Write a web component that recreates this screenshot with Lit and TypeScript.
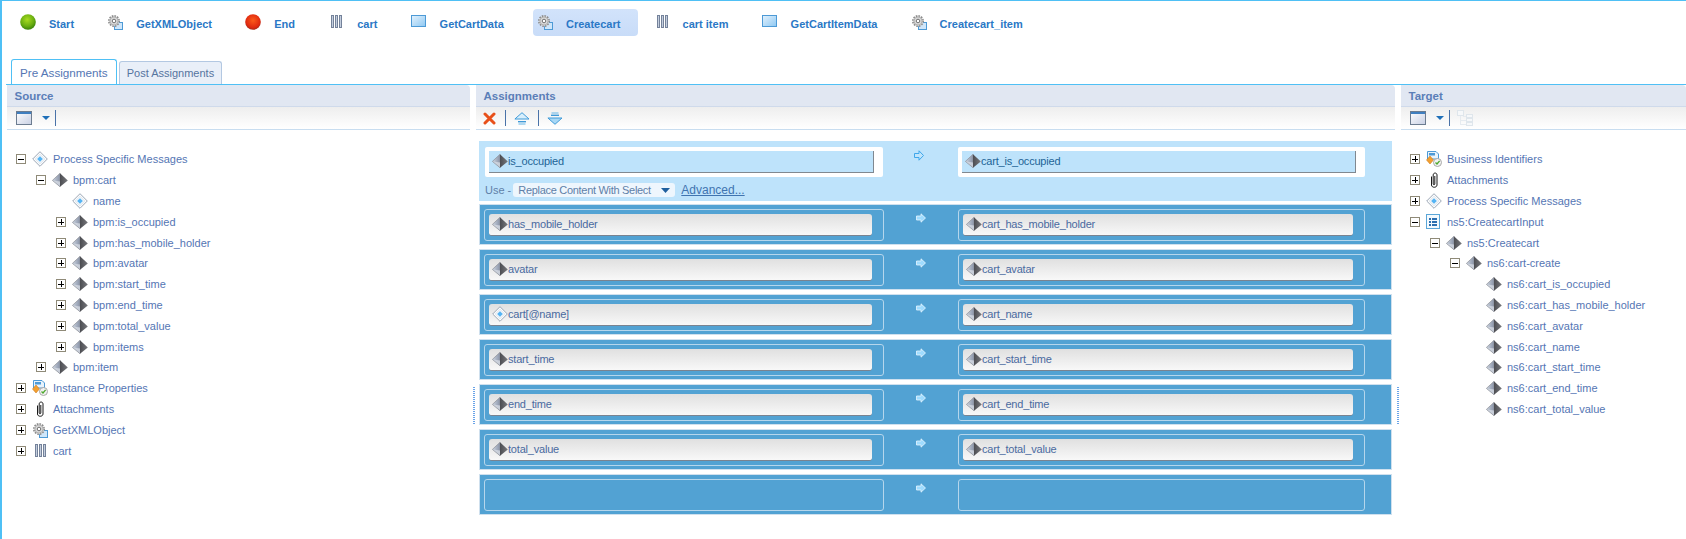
import { LitElement, css, html, svg } from "lit";
import { customElement } from "lit/decorators.js";
import { classMap } from "lit/directives/class-map.js";

type IconName =
  | "start" | "end" | "gear" | "bars" | "box"
  | "pyramid" | "diamond" | "props" | "clip" | "grid";

interface TreeNode {
  label: string;
  level: number;
  icon: IconName;
  toggle?: "plus" | "minus";
}

const icons: Record<IconName, unknown> = {
  start: svg`<svg width="16" height="16" viewBox="0 0 16 16">
    <defs><radialGradient id="g1" cx=".45" cy=".35" r=".7"><stop offset="0" stop-color="#a8dc20"/><stop offset=".6" stop-color="#6aae10"/><stop offset="1" stop-color="#2f7a08"/></radialGradient></defs>
    <circle cx="8" cy="8" r="7.8" fill="url(#g1)"/></svg>`,
  end: svg`<svg width="16" height="16" viewBox="0 0 16 16">
    <defs><radialGradient id="r1" cx=".5" cy=".4" r=".7"><stop offset="0" stop-color="#fb5a1a"/><stop offset=".65" stop-color="#e02a10"/><stop offset="1" stop-color="#7a2a20"/></radialGradient></defs>
    <circle cx="8" cy="8" r="7.8" fill="url(#r1)"/></svg>`,
  gear: svg`<svg width="16" height="16" viewBox="0 0 16 16">
    <rect x="7.5" y="8.5" width="8" height="7" fill="#cfe6fa" stroke="#4d9ad6"/>
    <circle cx="7" cy="7" r="5.2" fill="#e4e4e4" stroke="#8c8c8c" stroke-width="1.6" stroke-dasharray="1.6 1.1"/>
    <circle cx="7" cy="7" r="4" fill="#dcdcdc" stroke="#a0a0a0" stroke-width=".7"/>
    <circle cx="7" cy="7" r="1.8" fill="#fff" stroke="#707070"/></svg>`,
  bars: svg`<svg width="16" height="14" viewBox="0 0 16 14" shape-rendering="crispEdges">
    <g fill="#c4cede" stroke="#74829a"><rect x="3.5" y=".5" width="2" height="12"/><rect x="7.5" y=".5" width="2" height="12"/><rect x="11.5" y=".5" width="2" height="12"/></g></svg>`,
  box: svg`<svg width="16" height="14" viewBox="0 0 16 14">
    <defs><linearGradient id="b1" x1="0" y1="0" x2="1" y2="1"><stop offset="0" stop-color="#e4f2fd"/><stop offset="1" stop-color="#8ec8f2"/></linearGradient></defs>
    <rect x=".5" y=".5" width="14" height="11" fill="url(#b1)" stroke="#4d9ad6"/></svg>`,
  pyramid: svg`<svg width="16" height="14" viewBox="0 0 16 14">
    <defs><linearGradient id="p1" x1="0" y1="0" x2="1" y2="0"><stop offset="0" stop-color="#ccd4e0"/><stop offset="1" stop-color="#8a94a8"/></linearGradient>
    <linearGradient id="p2" x1="0" y1="0" x2="1" y2="0"><stop offset="0" stop-color="#4c4d52"/><stop offset="1" stop-color="#77787c"/></linearGradient></defs>
    <path d="M8 .3 .4 7.4 8 13.7Z" fill="url(#p1)" stroke="#8c8f96" stroke-width=".7"/>
    <path d="M8 .3 15.8 7.4 8 13.7Z" fill="url(#p2)"/>
    <path d="M1.2 7.6 8 8.6 8 13.3Z" fill="#d4dae2" opacity=".8"/></svg>`,
  diamond: svg`<svg width="16" height="16" viewBox="0 0 16 16">
    <path d="M8 .7 15.3 8 8 15.3 .7 8Z" fill="#fff" stroke="#9aa6b4"/>
    <path d="M8 2.8 13.2 8 8 13.2 2.8 8Z" fill="#eef3f8" stroke="#d0d8e0" stroke-width=".5"/>
    <path d="M8 5.2 10.8 8 8 10.8 5.2 8Z" fill="#55b4f4"/></svg>`,
  props: svg`<svg width="16" height="16" viewBox="0 0 16 16">
    <path d="M1.5 .5H10L12.5 3V8H1.5Z" fill="#e8f3fc" stroke="#4d9ad6"/>
    <rect x="3" y="2" width="6" height="2.5" fill="#4d9ad6"/>
    <path d="M4 5 7.5 9 4 13 .5 9Z" fill="#f2a030" stroke="#c87010" stroke-width=".5"/>
    <circle cx="11.5" cy="11.5" r="4" fill="#f2f2f2" stroke="#a8a8a8"/>
    <path d="M9.5 11.5 11 13 13.6 9.8" fill="none" stroke="#4ca82c" stroke-width="1.3"/></svg>`,
  clip: svg`<svg width="16" height="16" viewBox="0 0 16 16">
    <path d="M5.5 4.5V13c0 3 5.5 3 5.5 0V3c0-2.6-3.8-2.6-3.8 0v9c0 1 1.6 1 1.6 0V4" fill="none" stroke="#1a1a1a" stroke-width="1"/></svg>`,
  grid: svg`<svg width="16" height="16" viewBox="0 0 16 16" shape-rendering="crispEdges">
    <rect x=".5" y=".5" width="13" height="14" fill="#f4fafe" stroke="#5aa6d8"/>
    <g fill="#2c6fb0"><rect x="3" y="4" width="2" height="2"/><rect x="6" y="4" width="5" height="2"/><rect x="3" y="7" width="2" height="2"/><rect x="6" y="7" width="5" height="2"/><rect x="3" y="10" width="2" height="2"/><rect x="6" y="10" width="5" height="2"/></g></svg>`,
};

const stepList: { label: string; icon: IconName; active?: boolean }[] = [
  { label: "Start", icon: "start" },
  { label: "GetXMLObject", icon: "gear" },
  { label: "End", icon: "end" },
  { label: "cart", icon: "bars" },
  { label: "GetCartData", icon: "box" },
  { label: "Createcart", icon: "gear", active: true },
  { label: "cart item", icon: "bars" },
  { label: "GetCartItemData", icon: "box" },
  { label: "Createcart_item", icon: "gear" },
];

const sourceTree: TreeNode[] = [
  { label: "Process Specific Messages", level: 0, icon: "diamond", toggle: "minus" },
  { label: "bpm:cart", level: 1, icon: "pyramid", toggle: "minus" },
  { label: "name", level: 2, icon: "diamond" },
  { label: "bpm:is_occupied", level: 2, icon: "pyramid", toggle: "plus" },
  { label: "bpm:has_mobile_holder", level: 2, icon: "pyramid", toggle: "plus" },
  { label: "bpm:avatar", level: 2, icon: "pyramid", toggle: "plus" },
  { label: "bpm:start_time", level: 2, icon: "pyramid", toggle: "plus" },
  { label: "bpm:end_time", level: 2, icon: "pyramid", toggle: "plus" },
  { label: "bpm:total_value", level: 2, icon: "pyramid", toggle: "plus" },
  { label: "bpm:items", level: 2, icon: "pyramid", toggle: "plus" },
  { label: "bpm:item", level: 1, icon: "pyramid", toggle: "plus" },
  { label: "Instance Properties", level: 0, icon: "props", toggle: "plus" },
  { label: "Attachments", level: 0, icon: "clip", toggle: "plus" },
  { label: "GetXMLObject", level: 0, icon: "gear", toggle: "plus" },
  { label: "cart", level: 0, icon: "bars", toggle: "plus" },
];

const targetTree: TreeNode[] = [
  { label: "Business Identifiers", level: 0, icon: "props", toggle: "plus" },
  { label: "Attachments", level: 0, icon: "clip", toggle: "plus" },
  { label: "Process Specific Messages", level: 0, icon: "diamond", toggle: "plus" },
  { label: "ns5:CreatecartInput", level: 0, icon: "grid", toggle: "minus" },
  { label: "ns5:Createcart", level: 1, icon: "pyramid", toggle: "minus" },
  { label: "ns6:cart-create", level: 2, icon: "pyramid", toggle: "minus" },
  { label: "ns6:cart_is_occupied", level: 3, icon: "pyramid" },
  { label: "ns6:cart_has_mobile_holder", level: 3, icon: "pyramid" },
  { label: "ns6:cart_avatar", level: 3, icon: "pyramid" },
  { label: "ns6:cart_name", level: 3, icon: "pyramid" },
  { label: "ns6:cart_start_time", level: 3, icon: "pyramid" },
  { label: "ns6:cart_end_time", level: 3, icon: "pyramid" },
  { label: "ns6:cart_total_value", level: 3, icon: "pyramid" },
];

const assignments: { from?: string; to?: string; fromIcon?: IconName }[] = [
  { from: "has_mobile_holder", to: "cart_has_mobile_holder" },
  { from: "avatar", to: "cart_avatar" },
  { from: "cart[@name]", to: "cart_name", fromIcon: "diamond" },
  { from: "start_time", to: "cart_start_time" },
  { from: "end_time", to: "cart_end_time" },
  { from: "total_value", to: "cart_total_value" },
  {},
];

const windowIcon = svg`<svg width="17" height="15" viewBox="0 0 17 15" shape-rendering="crispEdges">
  <defs><linearGradient id="w1" x1="0" y1="0" x2="1" y2="1"><stop offset="0" stop-color="#fff"/><stop offset="1" stop-color="#c8d0e4"/></linearGradient></defs>
  <rect x=".5" y=".5" width="15" height="13" fill="url(#w1)" stroke="#6c7c90"/>
  <rect x="1" y="1" width="14" height="2" fill="#3f7fc0"/></svg>`;

const caretIcon = svg`<svg width="8" height="4" viewBox="0 0 8 4"><path d="M0 0H8L4 4Z" fill="#1f6fb8"/></svg>`;

const selectCaret = svg`<svg width="9" height="5" viewBox="0 0 9 5"><path d="M0 0H9L4.5 5Z" fill="#1f5f9e"/></svg>`;

const deleteIcon = svg`<svg width="13" height="13" viewBox="0 0 13 13">
  <path d="M2 2 11 11M11 2 2 11" stroke="#e8501a" stroke-width="3" stroke-linecap="round"/></svg>`;

const upIcon = svg`<svg width="16" height="13" viewBox="0 0 16 13">
  <path d="M8 .7 15 7H.9Z" fill="#d8effc" stroke="#3f9ad8"/><rect x="4" y="9" width="8" height="1.4" fill="#3f9ad8"/><rect x="4.5" y="11.4" width="7" height="1.2" fill="#7cc0ea"/></svg>`;

const downIcon = svg`<svg width="16" height="13" viewBox="0 0 16 13">
  <rect x="4.5" y=".4" width="7" height="1.2" fill="#7cc0ea"/><rect x="4" y="2.6" width="8" height="1.4" fill="#3f9ad8"/><path d="M8 12.3 15 6H.9Z" fill="#a8d8f6" stroke="#3f9ad8"/></svg>`;

const mapIcon = svg`<svg width="10" height="11" viewBox="0 0 10 11">
  <path d="M.5 3.5H5V.8L9.5 5.5 5 10.2V7.5H.5Z" fill="#bfe4fb" stroke="#3fa6ea"/></svg>`;

const mapIconDark = svg`<svg width="10" height="10" viewBox="0 0 10 10">
  <path d="M.5 3H5V.8L9.5 5 5 9.2V7H.5Z" fill="#9fdcff" stroke="#e8f6ff" stroke-width=".8"/></svg>`;

const treeDisabled = svg`<svg width="17" height="16" viewBox="0 0 17 16" shape-rendering="crispEdges">
  <g fill="#f6f8fa" stroke="#dfe6ec"><rect x=".5" y=".5" width="6" height="5"/><rect x="9.5" y="4.5" width="6" height="3"/><rect x="9.5" y="8.5" width="6" height="3"/><rect x="9.5" y="12.5" width="6" height="3"/></g>
  <path d="M3.5 6V14H9M3.5 10H9M6 6H9" fill="none" stroke="#e6ebf0"/></svg>`;

const plusMinus = (kind: "plus" | "minus") => svg`<svg width="10" height="10" viewBox="0 0 10 10" shape-rendering="crispEdges">
  <rect x=".5" y=".5" width="9" height="9" fill="#fff" stroke="#8f8a78"/>
  <rect x="2" y="4.5" width="6" height="1" fill="#000"/>
  ${kind === "plus" ? svg`<rect x="4.5" y="2" width="1" height="6" fill="#000"/>` : ""}</svg>`;

@customElement("app-root")
export class AppRoot extends LitElement {
  static styles = css`
    :host {
      display: block;
      height: 539px;
      overflow: hidden;
      position: relative;
      box-sizing: border-box;
      border-top: 1px solid #4fc0f5;
      border-left: 2px solid #4fc0f5;
      background: #fff;
      font-family: "Liberation Sans", Arial, sans-serif;
      font-size: 11px;
      color: #5576b4;
    }

    svg {
      display: block;
    }

    .steps {
      display: flex;
      gap: 11.2px;
      padding: 8px 0 0 14px;
      height: 58px;
      box-sizing: border-box;
      align-items: flex-start;
    }

    .step {
      box-sizing: border-box;
      display: flex;
      align-items: center;
      height: 27px;
      padding: 2px 18px 0 4px;
      border-radius: 4px;
      font-weight: bold;
      font-size: 11px;
      color: #2a78c6;
      white-space: nowrap;
    }

    .step.active {
      background: linear-gradient(#d2e3fb, #c8dcf8);
    }

    .step .step-icon {
      width: 16px;
      margin: -3px 13px 0 0;
    }

    .tabs {
      display: flex;
      align-items: flex-end;
      gap: 2px;
      height: 25px;
      margin-left: 9px;
    }

    .tab {
      box-sizing: border-box;
      height: 23px;
      padding: 0 7px;
      display: flex;
      align-items: center;
      background: #e9eff8;
      border: 1px solid #b3c8e2;
      border-bottom: 0;
      border-radius: 3px 3px 0 0;
      font-size: 11px;
      color: #56749f;
    }

    .tab.current {
      height: 25px;
      padding: 0 8px;
      background: #fff;
      border-color: #4fc0f5;
      border-width: 1px 1px 0;
      font-size: 11.7px;
      color: #5576b4;
    }

    .panel {
      display: grid;
      grid-template-columns: 463px 919px 1fr;
      gap: 6px;
      margin-left: 4px;
      padding-left: 1px;
      border-top: 1px solid #4fc0f5;
    }

    .col-head {
      height: 21px;
      display: flex;
      align-items: center;
      padding-left: 7.5px;
      background: #e1e7f2;
      border-bottom: 1px solid #cfdaeb;
      border-radius: 0 4px 0 0;
      font-weight: bold;
      font-size: 11.5px;
      color: #5b7eb8;
    }

    .toolbar {
      box-sizing: border-box;
      height: 23px;
      display: flex;
      align-items: center;
      background: linear-gradient(#eeeeee, #ffffff);
      border-bottom: 1px solid #c8ddf0;
    }

    .toolbar .sep {
      width: 1px;
      height: 16px;
      background: #4a72a8;
    }

    .toolbar.src {
      padding-left: 9px;
    }

    .toolbar.src .caret {
      margin: 0 5px 0 9px;
    }

    .toolbar.asg {
      padding-left: 7px;
    }

    .toolbar.asg .sep {
      margin: 0 8px 0 9px;
    }

    .toolbar.asg .sep + svg + .sep {
      margin-left: 8px;
    }

    .toolbar .dim {
      margin-left: 7px;
    }

    .tree {
      padding-top: 19px;
    }

    .node {
      display: flex;
      align-items: center;
      height: 20.8px;
      white-space: nowrap;
    }

    .node.l0 {
      padding-left: 9px;
    }
    .node.l1 {
      padding-left: 29px;
    }
    .node.l2 {
      padding-left: 49px;
    }
    .node.l3 {
      padding-left: 69px;
    }

    .toggle {
      width: 10px;
      margin-right: 6px;
      flex: none;
    }

    .node-icon {
      width: 16px;
      margin-right: 5px;
      flex: none;
    }

    .rows {
      padding: 11px 3px 0;
    }

    .row {
      box-sizing: border-box;
      display: grid;
      grid-template-columns: 400px 74px 407px;
      height: 41px;
      margin-bottom: 4px;
      padding: 4px 0 0 4px;
      background: #52a2d3;
      border: 1px solid #cfe0ee;
    }

    .row.selected {
      height: 60px;
      margin-bottom: 3px;
      padding: 6px 0 0 6px;
      background: #bee3fb;
      border: 0;
      grid-template-columns: 398px 75px 407px;
      grid-template-rows: 30px 1fr;
    }

    .slot {
      box-sizing: border-box;
      height: 32px;
      padding: 4px 11px 4px 4px;
      border: 1px solid #b5d6ec;
      border-radius: 3px;
    }

    .row.selected .slot {
      height: 30px;
      padding: 4px 9px 4px 4px;
      background: #fff;
      border: 0;
      border-radius: 2px;
    }

    .field {
      box-sizing: border-box;
      height: 22px;
      display: flex;
      align-items: center;
      padding: 0 0 2px 3px;
      background: linear-gradient(#e0e0e0, #f8f8f8);
      border-bottom: 1px solid #7a8390;
      border-radius: 3px;
      font-size: 11px;
      letter-spacing: -0.2px;
      color: #4a6aa0;
    }

    .row.selected .field {
      background: #bee3fb;
      border-right: 1px solid #808890;
      border-bottom: 1px solid #808890;
      border-radius: 0;
      color: #1d6396;
    }

    .arrow {
      padding: 4px 0 0 32px;
    }

    .row.selected .arrow {
      padding: 3px 0 0 31px;
    }

    .use {
      grid-column: 1 / -1;
      display: flex;
      align-items: center;
      height: 14px;
      margin-top: 6px;
      white-space: nowrap;
      color: #5f7fa8;
    }

    .select {
      display: flex;
      align-items: center;
      justify-content: space-between;
      box-sizing: border-box;
      width: 162px;
      height: 14px;
      margin: 0 6px 0 2px;
      padding: 0 5px 0 5px;
      background: #eef6fd;
      border-radius: 3px;
      letter-spacing: -0.3px;
    }

    .advanced {
      font-size: 12px;
      color: #3f74b0;
      text-decoration: underline;
    }

    .grip {
      position: absolute;
      width: 2px;
      height: 38px;
      top: 386px;
      background: repeating-linear-gradient(#6aa4e8 0 1px, #ffffff 1px 2px);
    }

    .grip.left {
      left: 471px;
    }

    .grip.right {
      left: 1395px;
    }
  `;

  private node(n: TreeNode) {
    return html`<div class="node l${n.level}">
      <span class="toggle">${n.toggle ? plusMinus(n.toggle) : ""}</span>
      <span class="node-icon">${icons[n.icon]}</span>
      <span>${n.label}</span>
    </div>`;
  }

  private slot(label?: string, icon: IconName = "pyramid") {
    return html`<div class="slot">
      ${label
        ? html`<div class="field">${icons[icon]}<span>${label}</span></div>`
        : ""}
    </div>`;
  }

  render() {
    return html`
      <div class="steps">
        ${stepList.map(
          (s) => html`<div class=${classMap({ step: true, active: !!s.active })}>
            <span class="step-icon">${icons[s.icon]}</span>${s.label}
          </div>`
        )}
      </div>
      <div class="tabs">
        <div class="tab current">Pre Assignments</div>
        <div class="tab">Post Assignments</div>
      </div>
      <div class="panel">
        <section>
          <div class="col-head">Source</div>
          <div class="toolbar src">
            ${windowIcon}<span class="caret">${caretIcon}</span><span class="sep"></span>
          </div>
          <div class="tree">${sourceTree.map((n) => this.node(n))}</div>
        </section>
        <section>
          <div class="col-head">Assignments</div>
          <div class="toolbar asg">
            ${deleteIcon}<span class="sep"></span>${upIcon}<span class="sep"></span>${downIcon}
          </div>
          <div class="rows">
            <div class="row selected">
              ${this.slot("is_occupied")}
              <div class="arrow">${mapIcon}</div>
              ${this.slot("cart_is_occupied")}
              <div class="use">
                Use -
                <span class="select">Replace Content With Select ${selectCaret}</span>
                <span class="advanced">Advanced...</span>
              </div>
            </div>
            ${assignments.map(
              (a) => html`<div class="row">
                ${this.slot(a.from, a.fromIcon)}
                <div class="arrow">${mapIconDark}</div>
                ${this.slot(a.to)}
              </div>`
            )}
          </div>
        </section>
        <section>
          <div class="col-head">Target</div>
          <div class="toolbar src">
            ${windowIcon}<span class="caret">${caretIcon}</span><span class="sep"></span>
            <span class="dim">${treeDisabled}</span>
          </div>
          <div class="tree">${targetTree.map((n) => this.node(n))}</div>
        </section>
      </div>
      <div class="grip left"></div>
      <div class="grip right"></div>
    `;
  }
}
